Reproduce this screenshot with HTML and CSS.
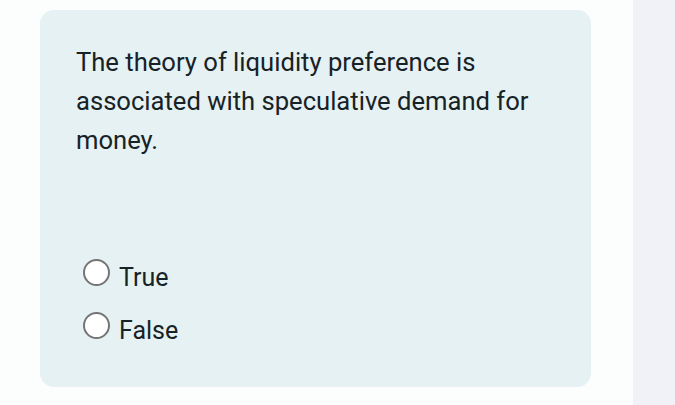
FILE: index.html
```html
<!DOCTYPE html>
<html>
<head>
<meta charset="utf-8">
<link rel="stylesheet" href="styles.css">
</head>
<body>
<div class="page">
  <main class="main">
    <section class="card">
      <p class="question">The theory of liquidity preference is associated with speculative demand for money.</p>
      <div class="options">
        <label class="option"><span class="radio"></span><span class="label">True</span></label>
        <label class="option"><span class="radio"></span><span class="label">False</span></label>
      </div>
    </section>
  </main>
  <aside class="side"></aside>
</div>
</body>
</html>
```
FILE: styles.css
```css
html, body {
  margin: 0;
  padding: 0;
  background: #fcfdfd;
}
.page {
  display: flex;
  height: 405px;
  font-family: Roboto, "Noto Sans", sans-serif;
}
.main {
  width: 633px;
  padding: 10px 42px 0 40px;
  box-sizing: border-box;
}
.side {
  flex: 1;
  background: #f0f2f7;
}
.card {
  background: #e5f1f3;
  border-radius: 14px;
  height: 377px;
  box-sizing: border-box;
  padding: 33px 36px 0 36px;
}
.question {
  margin: 0;
  font-size: 25.6px;
  line-height: 39px;
  color: #172226;
  width: 470px;
}
.options {
  margin-top: 99px;
  display: flex;
  flex-direction: column;
  gap: 20px;
  padding-left: 7px;
}
.option {
  display: flex;
  align-items: baseline;
  gap: 9px;
  font-size: 25px;
  color: #172226;
}
.radio {
  width: 23px;
  height: 23px;
  border: 2px solid #757575;
  border-radius: 50%;
  background: #fff;
}
```
